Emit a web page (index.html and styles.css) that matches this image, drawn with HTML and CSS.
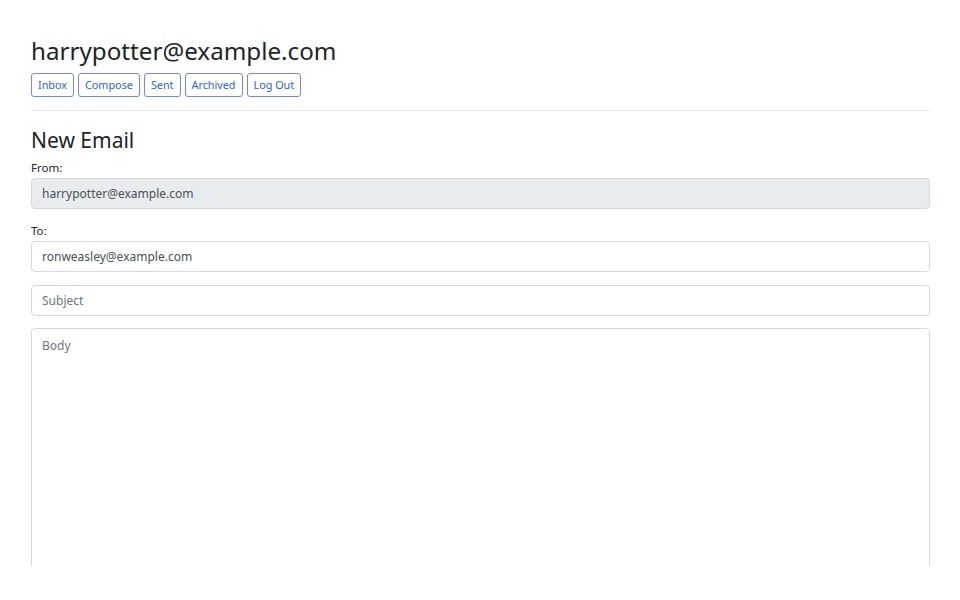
FILE: index.html
```html
<!DOCTYPE html>
<html>
<head>
<meta charset="utf-8">
<link rel="stylesheet" href="styles.css">
</head>
<body>
<div class="page">
  <div class="container">
    <h2 class="user">harrypotter@example.com</h2>
    <div class="nav">
      <button class="btn">Inbox</button>
      <button class="btn">Compose</button>
      <button class="btn">Sent</button>
      <button class="btn">Archived</button>
      <button class="btn">Log Out</button>
    </div>
    <hr class="rule">
    <h3 class="title">New Email</h3>
    <form class="form">
      <div class="group first">
        <div class="label">From:</div>
        <input class="field disabled" disabled value="harrypotter@example.com">
      </div>
      <div class="group">
        <div class="label">To:</div>
        <input class="field" value="ronweasley@example.com">
      </div>
      <div class="group last">
        <input class="field" placeholder="Subject">
      </div>
      <textarea class="field body" placeholder="Body"></textarea>
    </form>
  </div>
</div>
</body>
</html>
```
FILE: styles.css
```css
html, body {
  margin: 0;
  padding: 0;
  background: #fff;
}
.page {
  height: 566px;
  overflow: hidden;
}
.container {
  padding: 0 30px 0 31px;
  font-family: "Noto Sans", "Open Sans", sans-serif;
  color: #212529;
}
.user {
  margin: 34px 0 0 0;
  font-size: 24.2px;
  font-weight: 400;
  line-height: 34px;
}
.nav {
  display: flex;
  gap: 4px;
  margin-top: 5px;
}
.btn {
  font-family: inherit;
  font-size: 10.8px;
  height: 24px;
  padding: 0 6px;
  background: #fff;
  color: #2d62e0;
  border: 1px solid #7585f0;
  border-radius: 3px;
  line-height: 22px;
}
.rule {
  margin: 13px 0 0 0;
  border: 0;
  border-top: 1px solid #e8e8e8;
}
.title {
  margin: 14px 0 5px 0;
  font-size: 21px;
  font-weight: 400;
  line-height: 30px;
}
.form {
  display: flex;
  flex-direction: column;
}
.group {
  display: flex;
  flex-direction: column;
  margin-bottom: 13px;
}
.group.first {
  margin-bottom: 14px;
}
.group.last {
  margin-bottom: 12px;
}
.label {
  font-size: 11.5px;
  line-height: 15px;
  margin-bottom: 3px;
}
.field {
  box-sizing: border-box;
  width: 100%;
  height: 31px;
  font-family: inherit;
  font-size: 12px;
  color: #495057;
  padding: 0 10px;
  border: 1px solid #d6d8db;
  border-radius: 4px;
  background: #fff;
  outline: none;
}
.field::placeholder {
  color: #6c757d;
}
.field.disabled {
  background: #e9ecef;
  color: #495057;
}
.body {
  height: 400px;
  resize: none;
  padding: 8px 10px;
  margin-top: 0;
}
```
